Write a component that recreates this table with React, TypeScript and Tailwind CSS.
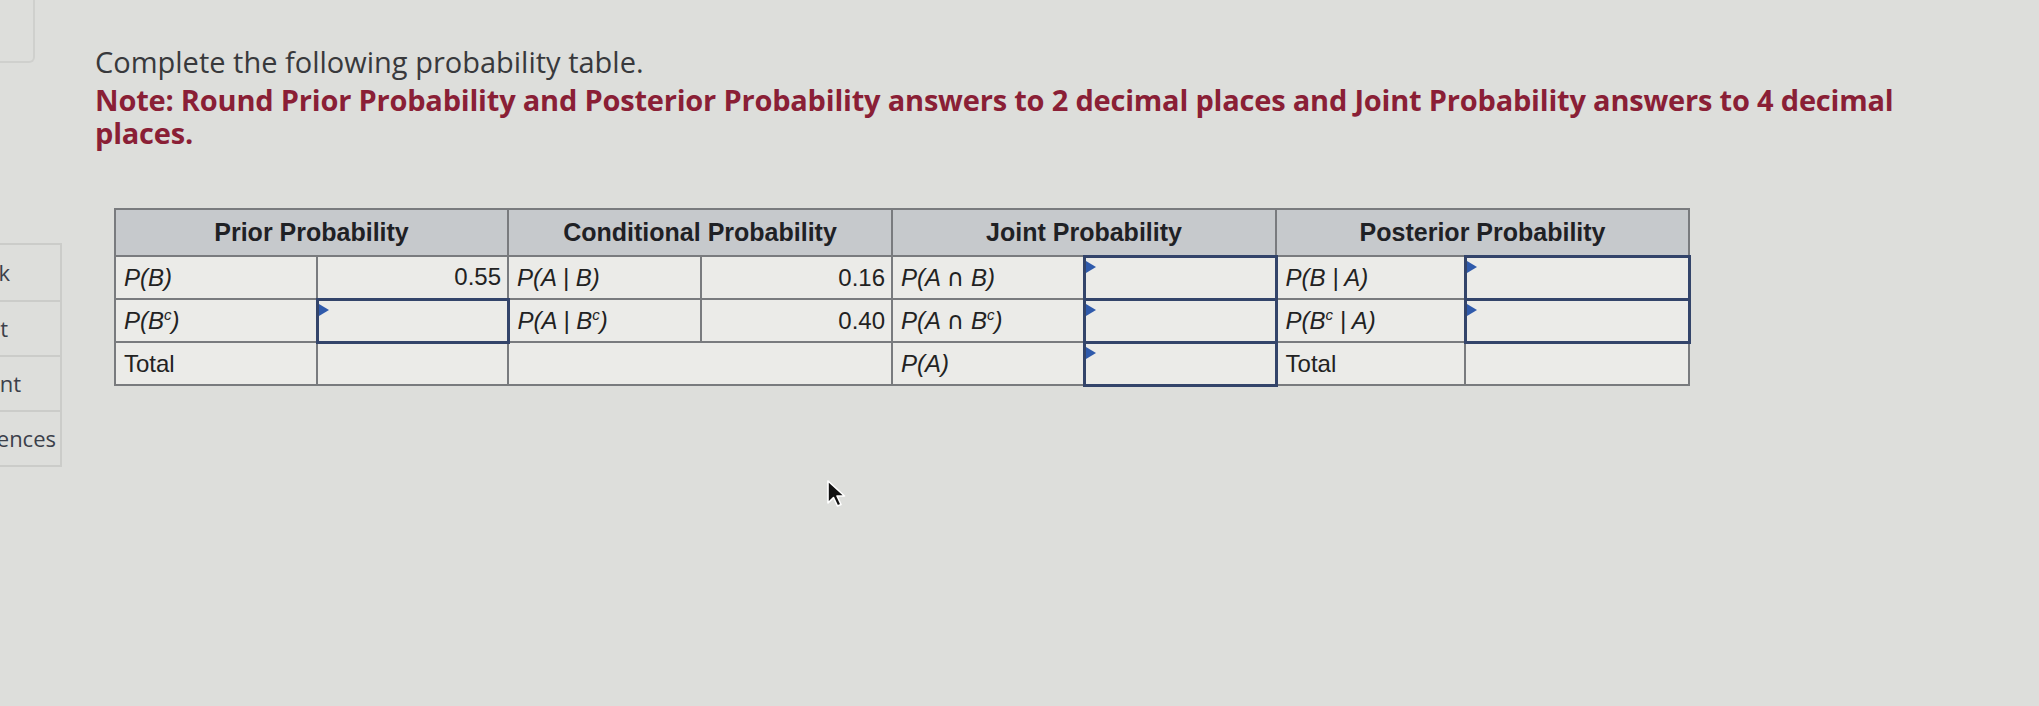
import React from 'react';

type Cell = {
  text?: React.ReactNode;
  kind: 'label' | 'value' | 'input' | 'blank';
  span?: number;
};

const Sup = ({ children }: { children: React.ReactNode }) => (
  <span className="relative -top-[9px] text-[15px]">{children}</span>
);

const Cap = () => <span style={{ fontFamily: '"DejaVu Sans", sans-serif' }}>∩</span>;

const rows: Cell[][] = [
  [
    { kind: 'label', text: 'P(B)' },
    { kind: 'value', text: '0.55' },
    { kind: 'label', text: 'P(A | B)' },
    { kind: 'value', text: '0.16' },
    { kind: 'label', text: <>P(A <Cap /> B)</> },
    { kind: 'input' },
    { kind: 'label', text: 'P(B | A)' },
    { kind: 'input' },
  ],
  [
    { kind: 'label', text: <>P(B<Sup>c</Sup>)</> },
    { kind: 'input' },
    { kind: 'label', text: <>P(A | B<Sup>c</Sup>)</> },
    { kind: 'value', text: '0.40' },
    { kind: 'label', text: <>P(A <Cap /> B<Sup>c</Sup>)</> },
    { kind: 'input' },
    { kind: 'label', text: <>P(B<Sup>c</Sup> | A)</> },
    { kind: 'input' },
  ],
  [
    { kind: 'label', text: <span className="not-italic">Total</span> },
    { kind: 'blank' },
    { kind: 'blank', span: 2 },
    { kind: 'label', text: 'P(A)' },
    { kind: 'input' },
    { kind: 'label', text: <span className="not-italic">Total</span> },
    { kind: 'blank' },
  ],
];

const headers = ['Prior Probability', 'Conditional Probability', 'Joint Probability', 'Posterior Probability'];
const widths = [202, 191, 193, 191, 192, 192, 189, 224];

function TableCell({ cell }: { cell: Cell }) {
  if (cell.kind === 'input') {
    return (
      <td className="relative border-[3px] border-[#33446a] bg-[#ebebe8] p-0">
        <svg className="absolute left-0 top-[3px]" width="10" height="12" viewBox="0 0 10 12">
          <path d="M0 0 L10 6 L0 12 Z" fill="#2f5aab" />
        </svg>
      </td>
    );
  }
  if (cell.kind === 'value') {
    return (
      <td className="border-2 border-[#797b7e] bg-[#ebebe8] px-[6px] text-right align-middle">
        {cell.text}
      </td>
    );
  }
  if (cell.kind === 'label') {
    return (
      <td className="border-2 border-[#797b7e] bg-[#ebebe8] px-[8px] italic align-middle">
        {cell.text}
      </td>
    );
  }
  return <td colSpan={cell.span} className="border-2 border-[#797b7e] bg-[#ebebe8]" />;
}

function Cursor() {
  return (
    <svg className="absolute left-[826px] top-[479px]" width="22" height="30" viewBox="0 0 22 30">
      <path
        d="M2 2 L2 24 L7.5 18.5 L11.5 27 L15 25.5 L11 17 L18.5 17 Z"
        fill="#111"
        stroke="#fff"
        strokeWidth="1.6"
        strokeLinejoin="round"
      />
    </svg>
  );
}

export default function App() {
  const side = [
    { label: 'eBook', pr: 'pr-[50px]' },
    { label: 'Hint', pr: 'pr-[52px]' },
    { label: 'Print', pr: 'pr-[39px]' },
    { label: 'References', pr: 'pr-[4px]' },
  ];

  return (
    <div className="relative flex h-[706px] w-[2039px] overflow-hidden bg-[#dddedb]">
      {/* left rail */}
      <div className="flex w-[80px] shrink-0 flex-col">
        <div className="h-[63px] w-[35px] rounded-br-[6px] border-b-2 border-r-2 border-[#cfd0cd]" />
        <div className="mt-[180px] w-[62px] border-y-2 border-r-2 border-[#cbccc9]">
          {side.map((s, i) => (
            <div
              key={s.label}
              className={`flex h-[55px] items-center justify-end overflow-hidden ${s.pr} ${i > 0 ? 'border-t-2 border-[#cbccc9]' : ''}`}
            >
              <span className="whitespace-nowrap text-[22px] text-[#3b404a]" style={{ fontFamily: '"Open Sans", sans-serif' }}>
                {s.label}
              </span>
            </div>
          ))}
        </div>
      </div>

      {/* main */}
      <div className="flex flex-col pl-[15px] pt-[45px]" style={{ fontFamily: '"Open Sans", sans-serif' }}>
        <p className="text-[29px] leading-[33px] text-[#38393c]">Complete the following probability table.</p>
        <p className="mt-[5px] w-[1830px] text-[29px] font-bold leading-[33px] tracking-[-0.2px] text-[#8a1f36]">
          Note: Round Prior Probability and Posterior Probability answers to 2 decimal places and Joint Probability answers to 4
          decimal places.
        </p>

        <table
          className="ml-[19px] mt-[59px] table-fixed border-collapse border-2 border-[#797b7e] text-[24px] text-[#222]"
          style={{ fontFamily: '"Liberation Sans", Arial, sans-serif', width: 1574 }}
        >
          <colgroup>
            {widths.map((w, i) => (
              <col key={i} style={{ width: w }} />
            ))}
          </colgroup>
          <thead>
            <tr className="h-[47px]">
              {headers.map((h) => (
                <th
                  key={h}
                  colSpan={2}
                  className="border-2 border-[#797b7e] bg-[#c6c9cc] text-center text-[25px] font-bold text-[#1f2125]"
                >
                  {h}
                </th>
              ))}
            </tr>
          </thead>
          <tbody>
            {rows.map((r, ri) => (
              <tr key={ri} className="h-[43px]">
                {r.map((c, ci) => (
                  <TableCell key={ci} cell={c} />
                ))}
              </tr>
            ))}
          </tbody>
        </table>
      </div>

      <Cursor />
    </div>
  );
}
